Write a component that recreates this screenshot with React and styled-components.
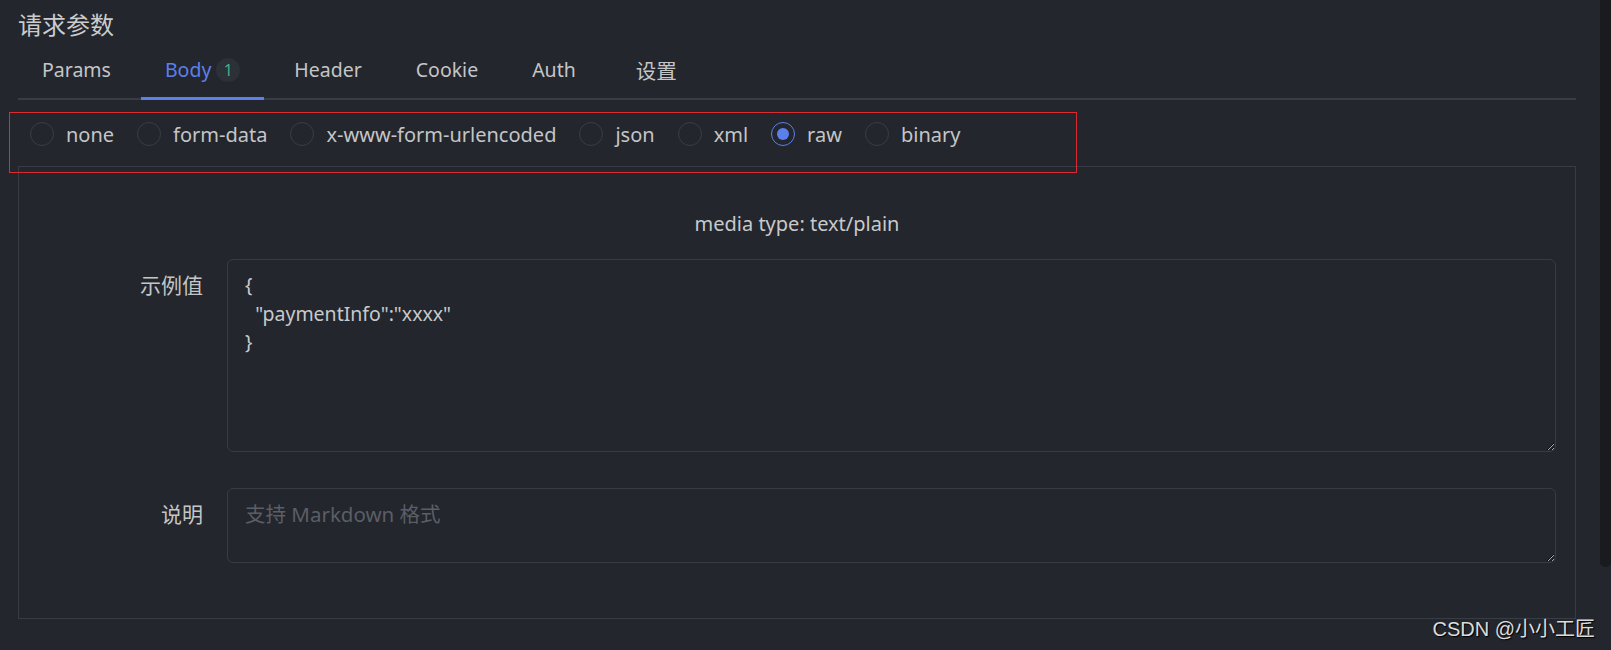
import React from 'react'
import styled, { createGlobalStyle } from 'styled-components'

const GlobalStyle = createGlobalStyle`
  html, body {
    margin: 0;
    padding: 0;
    background: #23262d;
    font-family: "Noto Sans", "Noto Sans CJK SC", sans-serif;
    color: #c4c5c7;
  }
`

const tabs = ['Params', 'Body', 'Header', 'Cookie', 'Auth', '设置']
const bodyTypes = ['none', 'form-data', 'x-www-form-urlencoded', 'json', 'xml', 'raw', 'binary']

export default function App() {
    return <Page>
        <GlobalStyle />
        <Title>请求参数</Title>
        <TabBar>
            {tabs.map(t => (
                <Tab key={t} active={t === 'Body'} cjk={t === '设置'}>
                    {t}
                    {t === 'Body' && <Badge>1</Badge>}
                </Tab>
            ))}
        </TabBar>
        <RadioRow>
            {bodyTypes.map(b => (
                <RadioItem key={b}>
                    <Circle checked={b === 'raw'} />
                    {b}
                </RadioItem>
            ))}
        </RadioRow>
        <Panel>
            <MediaType>media type: text/plain</MediaType>
            <FormRow>
                <Label>示例值</Label>
                <Area height={193} readOnly defaultValue={'{\n  "paymentInfo":"xxxx"\n}'} />
            </FormRow>
            <FormRow gap={36}>
                <Label>说明</Label>
                <Area height={75} placeholder="支持 Markdown 格式" />
            </FormRow>
        </Panel>
        <Marker />
        <Scrollbar />
        <Watermark>CSDN @小小工匠</Watermark>
    </Page>
}

const Page = styled.div`
  position: relative;
  width: 1611px;
  height: 650px;
  box-sizing: border-box;
  padding: 0 35px 0 18px;
  overflow: hidden;
`

const Title = styled.div`
  padding-top: 8px;
  font-size: 24px;
  line-height: 34px;
  color: #cbccce;
`

const TabBar = styled.div`
  display: flex;
  margin-top: 3px;
  border-bottom: 2px solid #393c44;
`

const Tab = styled.div`
  position: relative;
  display: flex;
  align-items: center;
  height: 53px;
  box-sizing: border-box;
  padding: 0 24px 4px ${p => p.cjk ? '30px' : '24px'};
  margin-right: 6px;
  font-size: ${p => p.cjk ? '20.5px' : '19.5px'};
  color: ${p => p.active ? '#5b80ec' : '#c4c5c7'};

  &::after {
    content: '';
    display: ${p => p.active ? 'block' : 'none'};
    position: absolute;
    left: 0;
    right: 0;
    bottom: -2px;
    height: 3px;
    background: #5b80ec;
  }
`

const Badge = styled.span`
  display: inline-flex;
  align-items: center;
  justify-content: center;
  width: 24px;
  height: 24px;
  margin-left: 5px;
  border-radius: 50%;
  background: #2c3037;
  color: #3db08a;
  font-size: 16px;
`

const RadioRow = styled.div`
  display: flex;
  align-items: center;
  height: 24px;
  margin-top: 22px;
  padding-left: 12px;
`

const RadioItem = styled.label`
  display: flex;
  align-items: center;
  gap: 12px;
  margin-right: 23px;
  font-size: 20px;
  color: #c4c5c7;
`

const Circle = styled.span`
  position: relative;
  width: 24px;
  height: 24px;
  box-sizing: border-box;
  border-radius: 50%;
  border: 1px solid ${p => p.checked ? '#5b80ec' : '#393d46'};

  &::after {
    content: '';
    display: ${p => p.checked ? 'block' : 'none'};
    position: absolute;
    left: 5px;
    top: 5px;
    width: 12px;
    height: 12px;
    border-radius: 50%;
    background: #5b80ec;
  }
`

const Panel = styled.div`
  margin-top: 20px;
  height: 453px;
  box-sizing: border-box;
  border: 1px solid #393c44;
  padding: 43px 19px 0 0;
`

const MediaType = styled.div`
  text-align: center;
  font-size: 20px;
  line-height: 28px;
  color: #c8c9cb;
  padding-left: 19px;
`

const FormRow = styled.div`
  display: grid;
  grid-template-columns: 184px 1fr;
  column-gap: 24px;
  margin-top: ${p => p.gap || 21}px;
`

const Label = styled.div`
  text-align: right;
  padding-top: 13px;
  font-size: 21px;
  line-height: 26px;
  color: #c4c5c7;
`

const Area = styled.textarea`
  display: block;
  width: 100%;
  height: ${p => p.height}px;
  box-sizing: border-box;
  padding: 11px 17px;
  border: 1px solid #393c44;
  border-radius: 6px;
  background: #23262d;
  color: #c8c9cb;
  font-family: "Noto Sans", "Noto Sans CJK SC", sans-serif;
  font-size: 19.5px;
  line-height: 28.5px;
  outline: none;
  color-scheme: dark;
  resize: vertical;

  &::placeholder {
    color: #5b5e65;
    font-size: 20.5px;
  }
`

const Marker = styled.div`
  position: absolute;
  left: 9px;
  top: 112px;
  width: 1068px;
  height: 61px;
  box-sizing: border-box;
  border: 1px solid #dd2a30;
  pointer-events: none;
`

const Scrollbar = styled.div`
  position: absolute;
  top: 0;
  right: 0;
  width: 11px;
  height: 567px;
  background: #191b1f;
  border-radius: 0 0 5px 5px;
`

const Watermark = styled.div`
  position: absolute;
  right: 16px;
  bottom: 8px;
  font-family: "Liberation Sans", "Noto Sans CJK SC", sans-serif;
  font-size: 20px;
  color: #dcdcdc;
  text-shadow: 1px 1px 1px #000;
`
